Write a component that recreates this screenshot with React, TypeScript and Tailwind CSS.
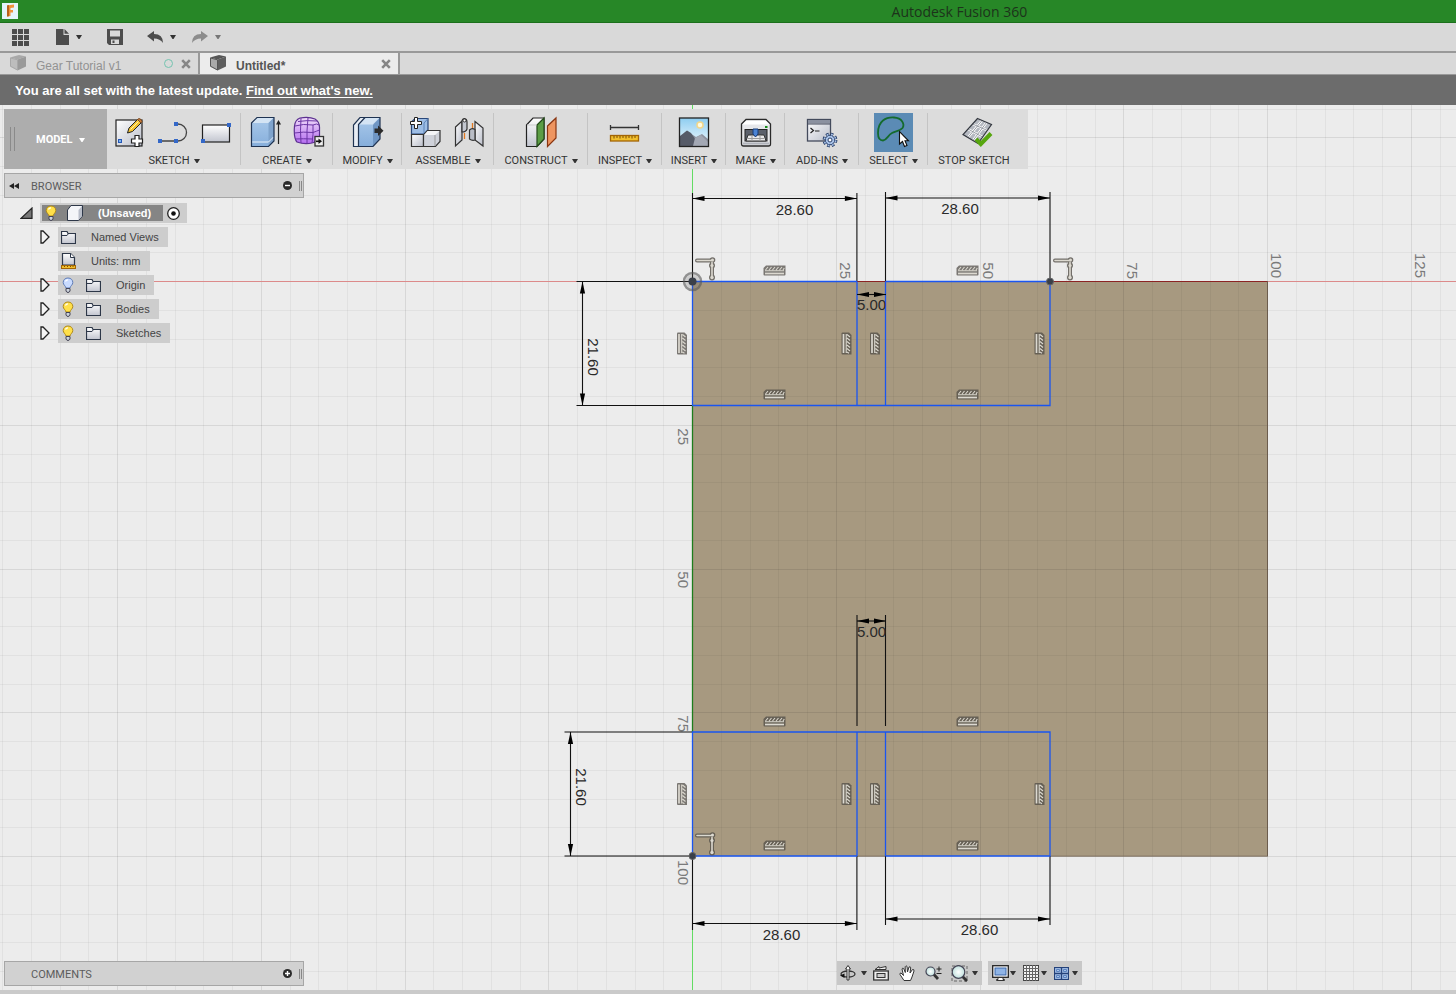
import React from "react";

type Kids = { children?: React.ReactNode };

/* ---------- small shared pieces ---------- */

function Caret({ className = "text-[#333]" }: { className?: string }) {
  return (
    <svg width="6" height="4" viewBox="0 0 6 4" className={"shrink-0 " + className} aria-hidden="true">
      <path d="M0 0H6L3.500 4H2.500Z" fill="currentColor" />
    </svg>
  );
}

function Icon({ w = 32, h = 40, children }: Kids & { w?: number; h?: number }) {
  return (
    <svg width={w} height={h} viewBox={`0 0 ${w} ${h}`} fill="none" className="shrink-0" aria-hidden="true">
      {children}
    </svg>
  );
}

/* ---------- ribbon icons ---------- */

const NAVY = "#1f3352";

function Gradients() {
  return (
    <svg width="0" height="0" className="absolute" aria-hidden="true">
      <defs>
        <linearGradient id="steel" x1="0" y1="0" x2="1" y2="1">
          <stop offset="0" stopColor="#ffffff" />
          <stop offset="1" stopColor="#b9bdc9" />
        </linearGradient>
        <linearGradient id="blue" x1="0" y1="0" x2="0" y2="1">
          <stop offset="0" stopColor="#a9c9ea" />
          <stop offset="1" stopColor="#86aedb" />
        </linearGradient>
        <linearGradient id="violet" x1="0" y1="0" x2="0" y2="1">
          <stop offset="0" stopColor="#f0dcfa" />
          <stop offset="1" stopColor="#b46cf0" />
        </linearGradient>
        <linearGradient id="sky" x1="0" y1="0" x2="0" y2="1">
          <stop offset="0" stopColor="#8ecdf0" />
          <stop offset="1" stopColor="#f3fbff" />
        </linearGradient>
        <linearGradient id="slab" x1="0" y1="0" x2="0" y2="1">
          <stop offset="0" stopColor="#ffffff" />
          <stop offset="1" stopColor="#c2c5cf" />
        </linearGradient>
        <radialGradient id="lens">
          <stop offset="0" stopColor="#ffffff" />
          <stop offset="1" stopColor="#bfe0dd" />
        </radialGradient>
      </defs>
    </svg>
  );
}

function SketchIcon() {
  return (
    <Icon>
      <rect x="1" y="7" width="26" height="26" fill="url(#steel)" stroke="#222" strokeWidth="1.200" />
      <rect x="3.500" y="26.500" width="3" height="3" fill="#7db4ee" stroke="#2457b8" />
      <path d="M12.500 20L14 15L22.500 6.500L26 10L17.500 18.500Z" fill="#f5c431" stroke="#222" />
      <path d="M22.500 6.500L24 5.500Q26.500 6 27 8.500L26 10Z" fill="#c77b3a" stroke="#7a4a20" />
      <path d="M15.500 16.500L23.500 8.500" stroke="#fff4a8" />
      <path d="M20 22.500H24V26H27.500V30H24V33.500H20V30H16.500V26H20Z" fill="#fff" stroke="#222" strokeWidth="1.200" />
    </Icon>
  );
}

function LineIcon() {
  return (
    <Icon>
      <path d="M2 28H20A8.500 8.500 0 0 0 20 11H18" stroke="#444" strokeWidth="1.300" />
      <path d="M0 26H4V30H0ZM16 26H20V30H16ZM16 9H20V13H16Z" fill="#3468c8" />
    </Icon>
  );
}

function RectIcon() {
  return (
    <Icon>
      <rect x="1.500" y="12" width="27" height="17" fill="url(#slab)" stroke="#222" strokeWidth="1.200" />
      <path d="M26 10H30V14H26ZM0 26H4V30H0Z" fill="#3468c8" />
    </Icon>
  );
}

function ExtrudeIcon() {
  return (
    <Icon>
      <path d="M1.500 10L7 4.500H24V28L18.500 33.500H1.500Z" fill="url(#blue)" />
      <path d="M1.500 10L7 4.500H24L18.500 10Z" fill="#d4e4f4" />
      <path d="M18.500 10L24 4.500V28L18.500 33.500Z" fill="#7fa3cc" />
      <path d="M2 29H18.500L23.500 24" stroke="#e9f1fa" />
      <path d="M1.500 10L7 4.500H24V28L18.500 33.500H1.500Z" stroke={NAVY} strokeWidth="1.200" />
      <path d="M28.500 31V9" stroke="#222" strokeWidth="1.200" />
      <path d="M26 11.500L28.500 7L31 11.500Z" fill="#222" />
    </Icon>
  );
}

function FormIcon() {
  return (
    <Icon>
      <path d="M7 5Q16 3.500 22 6Q27 9 26.500 16V23Q24 29 19 30Q11 31.500 4 29Q0.500 25 1.500 13Q2 7 7 5Z" fill="url(#violet)" stroke="#5c3090" strokeWidth="1.200" />
      <path d="M2 13Q10 10.500 20 12Q24 10 26 12M1.500 20Q10 18.500 20 19.500Q24 18 26.500 17M2 26Q10 25.500 20 26M8 5Q7 18 8 30M15 5Q13.500 18 14 30.500M20 12Q20.500 22 19 30M5 8.500Q14 7 24 8" stroke="#6b35a5" />
      <rect x="22" y="23.500" width="8.500" height="9.500" fill="#eee" stroke="#333" strokeWidth="1.300" />
      <path d="M23 28.300H26" stroke="#111" strokeWidth="1.600" />
      <path d="M25.500 25.500L29 28.300L25.500 31Z" fill="#111" />
    </Icon>
  );
}

function ModifyIcon() {
  return (
    <Icon>
      <path d="M1.500 12L8 4.500H28V26L21 33.500H1.500Z" fill="#e8edf4" />
      <path d="M6.500 11.500L13 4.500H28L21 11.500V33.500H6.500Z" fill="url(#blue)" />
      <path d="M6.500 11.500L13 4.500H28L21 11.500Z" fill="#d4e4f4" />
      <path d="M21 11.500L28 4.500V26L21 33.500Z" fill="#6f96c4" />
      <path d="M13 4.500L6.500 11.500V33.500M8 4.500H28V26L21 33.500H1.500V12L8 4.500Z" stroke={NAVY} strokeWidth="1.200" />
      <path d="M22.500 15.500H26V12.500L31.500 17.800L26 23V20H22.500Z" fill="#2b2b2b" />
    </Icon>
  );
}

function AssembleIcon() {
  return (
    <Icon>
      <path d="M1.500 9L5 5.500H18V17L14 21H1.500Z" fill="#9dbde5" stroke="#29477a" strokeWidth="1.200" />
      <path d="M14 21V10L18 5.500" stroke="#5d84ba" />
      <path d="M1.500 21.500H13.500V33.500H1.500Z" fill="url(#steel)" stroke="#333" strokeWidth="1.200" />
      <path d="M13.500 22L17.500 17.500H30V28.500L25.500 33.500H13.500Z" fill="#cfd2da" stroke="#333" strokeWidth="1.200" />
      <path d="M14 22H25L29.500 18H17.500Z" fill="#f4f5f7" />
      <path d="M25 22V33" stroke="#999" />
      <path d="M4.500 4.500H7.500V8.500H11.500V11.500H7.500V15.500H4.500V11.500H0.500V8.500H4.500Z" fill="#fff" stroke="#222" />
    </Icon>
  );
}

function JointIcon() {
  return (
    <Icon>
      <path d="M1.500 14L8 8V27L1.500 33Z" fill="url(#steel)" stroke="#333" strokeWidth="1.200" />
      <path d="M8 8Q8.500 5.500 10.500 5.500Q13 6 13 9V16Q12 19 8 19Z" fill="#c3c7d0" stroke="#333" strokeWidth="1.200" />
      <circle cx="10.500" cy="7.500" r="1.500" fill="#fff" stroke="#333" />
      <path d="M10.500 20V26M18.500 10V16" stroke="#e07820" strokeWidth="1.300" />
      <path d="M21 8.500L29 15V33L21 27Z" fill="url(#steel)" stroke="#333" strokeWidth="1.200" />
      <path d="M15.500 17Q18 14.500 21 16.500V27Q18 28 15.500 26Z" fill="#b9bdc7" stroke="#333" strokeWidth="1.200" />
    </Icon>
  );
}

function ConstructIcon() {
  return (
    <Icon>
      <path d="M1.500 12L8 5H19V26L12 33.500H1.500Z" fill="url(#slab)" stroke="#222" strokeWidth="1.200" />
      <path d="M12 12L19 5V26L12 33.500Z" fill="#5b9d45" stroke="#234a1a" strokeWidth="1.200" />
      <path d="M2 12H11.500" stroke="#ccc" />
      <path d="M22.500 13L31 5V25L22.500 33.500Z" fill="#ee9560" stroke="#8a3510" strokeWidth="1.200" />
    </Icon>
  );
}

function InspectIcon() {
  return (
    <Icon>
      <path d="M1.500 12V17M29.500 12V17M1.500 14.500H29.500" stroke="#333" strokeWidth="1.300" />
      <rect x="1.500" y="22.500" width="28" height="5.500" fill="#f1bf2c" stroke="#a36505" strokeWidth="1.300" />
      <path d="M5 23V25.500M8 23V25M11 23V25.500M14 23V25M17 23V25.500M20 23V25M23 23V25.500M26 23V25" stroke="#7d4d04" />
    </Icon>
  );
}

function InsertIcon() {
  return (
    <Icon>
      <rect x="1.500" y="5" width="29" height="28.500" fill="url(#sky)" />
      <circle cx="22" cy="12" r="3" fill="#fffbe0" stroke="#f2d68a" strokeWidth="1.500" />
      <path d="M2 24L9 18L18 24L24 21L30 26V33H2Z" fill="#8d929f" />
      <path d="M2 23L9 17.500L13 20L22 33H2Z" fill="#565b68" />
      <path d="M17 25L23 22L30 29V33H15Z" fill="#a3a8b4" />
      <rect x="1.500" y="5" width="29" height="28.500" stroke="#222" strokeWidth="1.300" />
    </Icon>
  );
}

function MakeIcon() {
  return (
    <Icon>
      <path d="M1.500 11L6 6.500H26L30.500 11V31Q30.500 33 28.500 33H3.500Q1.500 33 1.500 31Z" fill="#e6e7ea" stroke="#2a2a2a" strokeWidth="1.300" />
      <path d="M2.500 11.500L6.500 7.500H25.500L29.500 11.500Z" fill="#fff" />
      <rect x="5" y="16.500" width="22" height="11.500" fill="#5b606b" stroke="#222" />
      <path d="M8 22H24L26 28H6Z" fill="#e8e8ea" stroke="#333" />
      <path d="M8 25.500H24M12 22V28M20 22V28" stroke="#999" />
      <path d="M13 16H18V21L15.500 24L13 21Z" fill="#4a83d4" stroke="#173a78" />
      <rect x="25" y="13" width="2.500" height="2" fill="#178a17" />
      <path d="M3 30.500H29" stroke="#b0b3bb" strokeWidth="2" />
    </Icon>
  );
}

function AddinsIcon() {
  return (
    <Icon>
      <rect x="1.500" y="6.500" width="23" height="21.500" fill="url(#steel)" stroke="#444b5c" strokeWidth="1.300" />
      <rect x="2" y="7" width="22" height="3.500" fill="#8b91a0" />
      <path d="M2 11H24" stroke="#444b5c" />
      <path d="M4.500 15L7.500 17.500L4.500 20M9 18H13.500" stroke="#222" strokeWidth="1.200" />
      <circle cx="24" cy="27" r="5.700" stroke="#253c66" strokeWidth="3.400" strokeDasharray="2.500 1.977" />
      <circle cx="24" cy="27" r="4.800" fill="#a9c2e8" stroke="#253c66" />
      <circle cx="24" cy="27" r="5.700" stroke="#a9c2e8" strokeWidth="1.600" strokeDasharray="1.700 2.777" strokeDashoffset="-0.400" />
      <circle cx="24" cy="27" r="2" fill="#fff" stroke="#253c66" />
    </Icon>
  );
}

function SelectIcon() {
  return (
    <Icon w={39} h={39}>
      <path d="M4 20C4 8 12 4 20 4.500C28 5 31 11 28.500 15C26 18 21 18.500 18 20C14 22 13 27 9 27.500C5 27.500 4 24 4 20Z" stroke="#146b2d" strokeWidth="1.800" />
      <path d="M25.500 18.500V31L28.500 28.500L30.500 33.500L33 32.500L31 27.800H34.500Z" fill="#fff" stroke="#111" strokeWidth="1.100" />
    </Icon>
  );
}

function StopIcon() {
  return (
    <Icon>
      <path d="M15.500 5.500L29.500 11.500L16 30.500L1 21.500Z" fill="#b4b8c0" />
      <path d="M20 7.500L6 24.500M24.500 9.500L11 27.500M10.500 11L25.500 17.500M6 16L20.500 24" stroke="#fff" strokeWidth="2.400" />
      <path d="M20 7.500L6 24.500M24.500 9.500L11 27.500M10.500 11L25.500 17.500M6 16L20.500 24" stroke="#8a8f99" strokeWidth="0.900" />
      <path d="M15.500 5.500L29.500 11.500L16 30.500L1 21.500Z" stroke="#33373f" strokeWidth="1.200" />
      <path d="M14 26L18.800 31L29 20.500" stroke="#57a60f" strokeWidth="4" />
    </Icon>
  );
}

/* ---------- ribbon ---------- */

type GroupProps = { label: string; width: string; icons: { name: string; art: React.ReactNode }[]; gap?: string; active?: boolean; menu?: boolean; last?: boolean };

function Group({ label, width, icons, gap = "gap-3", active = false, menu = true, last = false }: GroupProps) {
  return (
    <div className={"relative flex flex-col items-center pt-1 " + width}>
      <div className={"flex h-10 items-start " + gap}>
        {icons.map((i) => (
          <button key={i.name} type="button" aria-label={i.name} className={active ? "h-[39px] bg-[#5b8bb5]" : "h-10"}>
            {i.art}
          </button>
        ))}
      </div>
      <button type="button" className="flex h-4 items-center gap-1 whitespace-nowrap text-[11px] leading-4 text-[#333]">
        {label}
        {menu && <Caret />}
      </button>
      {!last && <span className="absolute right-0 top-1 h-[52px] w-px bg-[#c4c4c4]" />}
    </div>
  );
}

function Ribbon() {
  return (
    <div className="flex h-[60px] w-fit bg-[#dcdcdc] font-[Roboto,sans-serif]">
      <div className="flex w-[103px] items-center bg-[#adadad] pl-[6px]">
        <span className="h-6 w-[5px] border-x border-[#8a8a8a]" />
        <button type="button" className="ml-[21px] flex items-center gap-[6px] pt-[2px] text-[11px] font-bold text-white">
          MODEL
          <Caret className="text-white" />
        </button>
      </div>
      <Group label="SKETCH" width="w-[134px]" icons={[{ name: "Create sketch", art: <SketchIcon /> }, { name: "Line", art: <LineIcon /> }, { name: "Rectangle", art: <RectIcon /> }]} gap="gap-[11px]" />
      <Group label="CREATE" width="w-[92px]" icons={[{ name: "Extrude", art: <ExtrudeIcon /> }, { name: "Create form", art: <FormIcon /> }]} gap="gap-[11px]" />
      <Group label="MODIFY" width="w-[69px]" icons={[{ name: "Press pull", art: <ModifyIcon /> }]} />
      <Group label="ASSEMBLE" width="w-[92px]" icons={[{ name: "New component", art: <AssembleIcon /> }, { name: "Joint", art: <JointIcon /> }]} />
      <Group label="CONSTRUCT" width="w-[94px]" icons={[{ name: "Offset plane", art: <ConstructIcon /> }]} />
      <Group label="INSPECT" width="w-[74px]" icons={[{ name: "Measure", art: <InspectIcon /> }]} />
      <Group label="INSERT" width="w-[64px]" icons={[{ name: "Insert image", art: <InsertIcon /> }]} />
      <Group label="MAKE" width="w-[59px]" icons={[{ name: "3D print", art: <MakeIcon /> }]} />
      <Group label="ADD-INS" width="w-[74px]" icons={[{ name: "Scripts and add-ins", art: <AddinsIcon /> }]} />
      <Group label="SELECT" width="w-[69px]" icons={[{ name: "Select", art: <SelectIcon /> }]} active />
      <Group label="STOP SKETCH" width="w-[100px] pr-2" icons={[{ name: "Stop sketch", art: <div className="pl-2"><StopIcon /></div> }]} menu={false} last />
    </div>
  );
}

/* ---------- window chrome ---------- */

function TitleBar() {
  return (
    <header className="flex h-[23px] items-center border-b border-[#1c701c] bg-[#278727]">
      <svg width="16" height="16" viewBox="0 0 16 16" className="ml-[2px] shrink-0" aria-hidden="true">
        <rect width="16" height="16" fill="#e4f3fb" />
        <path d="M5 2.500L12 1.500V4.500L8.500 5V7H11V9.500H8.500V13L5 13.500Z" fill="#f0923a" />
        <path d="M5 2.500L7 2V13.200L5 13.500Z" fill="#b9601c" />
      </svg>
      <div className="w-[60%]" />
      <h1 className="whitespace-nowrap pt-[2px] font-['Open_Sans',sans-serif] text-[14px] leading-5 text-[#1d331b]">Autodesk Fusion 360</h1>
    </header>
  );
}

function QuickBar() {
  return (
    <div className="flex h-[30px] items-center border-b-2 border-[#999] bg-[#d9d9d9] pl-3 text-[#4d4d4d]">
      <button type="button" aria-label="Data panel">
        <Icon w={17} h={17}>
          <path d="M0 0H5V5H0ZM6 0H11V5H6ZM12 0H17V5H12ZM0 6H5V11H0ZM6 6H11V11H6ZM12 6H17V11H12ZM0 12H5V17H0ZM6 12H11V17H6ZM12 12H17V17H12Z" fill="#4d4d4d" />
        </Icon>
      </button>
      <button type="button" aria-label="File" className="ml-[27px] flex items-center gap-[7px]">
        <Icon w={13} h={16}>
          <path d="M0 0H7.500V6H13V16H0ZM8.500 0L13 4.800H8.500Z" fill="#4d4d4d" />
        </Icon>
        <Caret />
      </button>
      <button type="button" aria-label="Save" className="ml-[25px]">
        <Icon w={16} h={16}>
          <path fillRule="evenodd" d="M0 0H16V16H2L0 14ZM3 1.500V7.500H13V1.500ZM4 10.500V15H12V10.500ZM5.500 11.500H7.500V14H5.500Z" fill="#4d4d4d" />
        </Icon>
      </button>
      <button type="button" aria-label="Undo" className="ml-6 flex items-center gap-[7px]">
        <Icon w={16} h={12}>
          <path d="M0 5L7 0V3Q16 3 16 12Q13 7.500 7 7.500V10.500Z" fill="#4d4d4d" />
        </Icon>
        <Caret />
      </button>
      <button type="button" aria-label="Redo" className="ml-4 flex items-center gap-[7px]">
        <Icon w={16} h={12}>
          <path d="M16 5L9 0V3Q0 3 0 12Q3 7.500 9 7.500V10.500Z" fill="#8c8c8c" />
        </Icon>
        <Caret className="text-[#777]" />
      </button>
    </div>
  );
}

function TabCube({ light, mid, dark }: { light: string; mid: string; dark: string }) {
  return (
    <svg width="16" height="16" viewBox="0 0 16 16" className="mb-[2px] shrink-0" aria-hidden="true">
      <path d="M0 2.500L9 0L16 1.500L7.500 4.500Z" fill={mid} />
      <path d="M0 2.500L7.500 4.500V15.500L0 11.500Z" fill={light} />
      <path d="M7.500 4.500L16 1.500V11.500L7.500 15.500Z" fill={dark} />
      <path d="M0.500 3L7.500 4.800V15L0.500 11.200Z" stroke={mid} fill="none" />
    </svg>
  );
}

function CloseX({ name }: { name: string }) {
  return (
    <button type="button" aria-label={name}>
      <Icon w={10} h={10}>
        <path d="M1.200 1.200L8.800 8.800M8.800 1.200L1.200 8.800" stroke="#868686" strokeWidth="2.600" />
      </Icon>
    </button>
  );
}

function Tabs() {
  return (
    <div className="flex h-[22px] border-b border-[#999] bg-[#d9d9d9] text-[12px]">
      <div className="flex w-[200px] items-center border-r-2 border-[#999] pl-[10px] pr-[7px]">
        <TabCube light="#bdbdbd" mid="#a8a8a8" dark="#9a9a9a" />
        <button type="button" className="ml-[10px] pt-1 leading-4 text-[#929292]">Gear Tutorial v1</button>
        <span className="ml-auto mr-2 size-[9px] rounded-full border-[1.5px] border-[#74c4b0]" />
        <CloseX name="Close Gear Tutorial v1" />
      </div>
      <div className="flex w-[200px] items-center border-r-2 border-[#999] bg-[#ececec] pl-[10px] pr-[7px]">
        <TabCube light="#a9a9a9" mid="#555" dark="#5e5e5e" />
        <button type="button" className="ml-[10px] pt-1 font-bold leading-4 text-[#555]">Untitled*</button>
        <span className="ml-auto" />
        <CloseX name="Close Untitled" />
      </div>
    </div>
  );
}

/* ---------- browser tree ---------- */

function Bulb({ off = false }: { off?: boolean }) {
  return (
    <svg width="12" height="16" viewBox="0 0 12 16" className="shrink-0" aria-hidden="true">
      <path d="M6 1C9 1 10.800 3 10.800 5.500C10.800 8 8.500 8.500 8 11H4C3.500 8.500 1.200 8 1.200 5.500C1.200 3 3 1 6 1Z" fill={off ? "#c9dbff" : "#ffe04a"} stroke={off ? "#5f7db8" : "#b08a1a"} />
      <path d="M3.500 4.500Q4 2.800 6 2.800" stroke="#fff" fill="none" strokeWidth="1.300" />
      <path d="M4 11.500H8V14L7 15.300H5L4 14Z" fill="#ccd3dc" stroke="#445" />
    </svg>
  );
}

function Folder() {
  return (
    <svg width="15" height="13" viewBox="0 0 15 13" className="shrink-0" aria-hidden="true">
      <path d="M0.500 0.500H6L7 2.500H14.500V12.500H0.500Z" fill="url(#slab)" stroke="#2d3748" strokeWidth="1.200" />
      <path d="M0.500 4.500H6L7.500 2.500" stroke="#2d3748" fill="none" />
    </svg>
  );
}

function UnitsIcon() {
  return (
    <svg width="15" height="16" viewBox="0 0 15 16" className="shrink-0" aria-hidden="true">
      <path d="M1.500 12V0.500H9.500L13.500 4.500V12Z" fill="url(#slab)" stroke="#2d3748" strokeWidth="1.200" />
      <path d="M9.500 0.500V4.500H13.500" stroke="#2d3748" fill="#fff" />
      <rect x="0.500" y="12.500" width="14" height="3" fill="#f1bf2c" stroke="#a36505" />
      <path d="M3.500 13V14M6.500 13V14M9.500 13V14M12 13V14" stroke="#7d4d04" />
    </svg>
  );
}

function Expander() {
  return (
    <button type="button" aria-label="Expand" className="w-[18px]">
      <svg width="10" height="14" viewBox="0 0 10 14" aria-hidden="true">
        <path d="M1 1H3L9 7L3 13H1Z" fill="#f4f4f4" stroke="#222" strokeWidth="1.300" />
      </svg>
    </button>
  );
}

function TreeRow({ label, bulb, units = false }: { label: string; bulb?: "on" | "off"; units?: boolean }) {
  return (
    <li className="flex h-5 items-center pl-9">
      {units ? <span className="w-[18px]" /> : <Expander />}
      <span className="flex h-5 items-center bg-[#cdcdcd] pl-[3px] pr-[9px]">
        {bulb && <span className="mr-3 flex pl-[1px]"><Bulb off={bulb === "off"} /></span>}
        {units ? <UnitsIcon /> : <Folder />}
        <span className="ml-[15px] whitespace-nowrap">{label}</span>
      </span>
    </li>
  );
}

function PanelBar({ title, plus = false }: { title: string; plus?: boolean }) {
  return (
    <div className="flex h-[25px] w-[300px] shrink-0 items-center border border-[#a6a6a6] bg-[#d1d1d1] pr-[1px] font-[Roboto,sans-serif]">
      <span className="w-[26px] pl-1">
        {!plus && (
          <svg width="10" height="6" viewBox="0 0 10 6" aria-hidden="true">
            <path d="M5 0V6L0 3ZM10 0V6L5 3Z" fill="#222" />
          </svg>
        )}
      </span>
      <h2 className="pt-[2px] text-[11px] leading-4 text-[#5c5c5c]">{title}</h2>
      <button type="button" aria-label={plus ? "Expand panel" : "Collapse panel"} className="ml-auto">
        <Icon w={9} h={9}>
          <circle cx="4.500" cy="4.500" r="4.500" fill="#2b2b2b" />
          <path d={plus ? "M2 4.500H7M4.500 2V7" : "M2 4.500H7"} stroke="#fff" strokeWidth="1.400" />
        </Icon>
      </button>
      <span className="ml-[7px] h-[10px] w-[3px] border-x border-[#888]" />
    </div>
  );
}

function BrowserPanel() {
  return (
    <section className="mt-1 w-[300px]">
      <PanelBar title="BROWSER" />
      <ul className="mt-[5px] flex flex-col gap-1 text-[11px] leading-5 text-[#444]">
        <li className="flex h-5 items-center pl-4">
          <button type="button" aria-label="Collapse" className="w-5">
            <svg width="13" height="12" viewBox="0 0 13 12" aria-hidden="true">
              <path d="M12 1V11.300H1Z" fill="#777" stroke="#222" strokeWidth="1.200" />
            </svg>
          </button>
          <span className="flex h-5 items-center bg-[#cdcdcd] pl-[2px]">
            <span className="flex h-4 items-center bg-[#858585] pl-[3px] pr-3">
              <Bulb />
              <svg width="16" height="16" viewBox="0 0 16 16" className="ml-[10px]" aria-hidden="true">
                <path d="M0.500 5L4 0.500H15.500V11L11.500 15.500H0.500Z" fill="#f4f5f8" stroke="#2d3748" />
                <path d="M11.500 5L15 1V11L11.500 15Z" fill="#b9bec9" />
              </svg>
              <b className="ml-[15px] text-white">(Unsaved)</b>
            </span>
            <svg width="13" height="13" viewBox="0 0 13 13" className="ml-1 mr-[7px]" aria-hidden="true">
              <circle cx="6.500" cy="6.500" r="5.800" fill="#fff" stroke="#222" strokeWidth="1.300" />
              <circle cx="6.500" cy="6.500" r="2.300" fill="#111" />
            </svg>
          </span>
        </li>
        <TreeRow label="Named Views" />
        <TreeRow label="Units: mm" units />
        <TreeRow label="Origin" bulb="off" />
        <TreeRow label="Bodies" bulb="on" />
        <TreeRow label="Sketches" bulb="on" />
      </ul>
    </section>
  );
}

/* ---------- navigation bar ---------- */

function NavBar() {
  return (
    <nav className="flex h-6 gap-[6px] text-[#333]">
      <div className="flex items-center bg-[#c8c8c8] pl-[3px] pr-1">
        <button type="button" aria-label="Orbit" className="flex items-center gap-[5px]">
          <Icon w={16} h={16}>
            <ellipse cx="8" cy="9" rx="7" ry="3" stroke="#333" strokeWidth="1.300" />
            <path d="M7 15V4H5.500L8 0.500L10.500 4H9V15Z" fill="#fff" stroke="#333" />
            <path d="M0 10.500L4.500 8.500V13Z" fill="#111" />
          </Icon>
          <Caret />
        </button>
        <button type="button" aria-label="Look at" className="ml-[6px]">
          <Icon w={16} h={16}>
            <rect x="0.700" y="6" width="14.600" height="9" fill="#eee" stroke="#333" strokeWidth="1.300" />
            <rect x="4" y="8.500" width="8" height="4" fill="#ccc" stroke="#333" />
            <path d="M2 4.500L6 1.500V3L13 1.500V4.500Z" fill="#eee" stroke="#333" />
          </Icon>
        </button>
        <button type="button" aria-label="Pan" className="ml-[10px]">
          <Icon w={16} h={16}>
            <path d="M5 15.500L1 9.500Q0.500 8 2 8L4.500 10.500L3 4Q3.500 2.500 4.700 3.500L6.300 7.500L6.200 1.700Q7 0 8 1.500L8.500 7L10 2Q11.500 1.200 11.700 2.800L11 8L13.500 4.500Q15.200 4 15 6L13 12L11.500 15.500Z" fill="#fff" stroke="#333" />
          </Icon>
        </button>
        <button type="button" aria-label="Zoom" className="ml-[10px]">
          <Icon w={17} h={16}>
            <path d="M8.500 9L13 14" stroke="#333" strokeWidth="2.800" />
            <circle cx="5.500" cy="6.500" r="4.500" fill="url(#lens)" stroke="#445" strokeWidth="1.200" />
            <path d="M11.500 4H16.500M14 1.500V6.500M11.500 8.500H16.500" stroke="#222" />
          </Icon>
        </button>
        <button type="button" aria-label="Zoom window" className="ml-[9px] flex items-center gap-1">
          <Icon w={17} h={17}>
            <rect x="1" y="1" width="15" height="15" stroke="#666" strokeDasharray="3 2" />
            <path d="M11.500 11.500L16 16" stroke="#333" strokeWidth="2.800" />
            <circle cx="7.500" cy="7" r="6.300" fill="url(#lens)" stroke="#445" strokeWidth="1.200" />
          </Icon>
          <Caret />
        </button>
      </div>
      <div className="flex items-center gap-[7px] bg-[#c8c8c8] px-1">
        <button type="button" aria-label="Display settings" className="flex items-center gap-px">
          <Icon w={17} h={16}>
            <rect x="0.700" y="0.700" width="15.600" height="11.600" fill="#fff" stroke="#222" strokeWidth="1.300" />
            <rect x="3" y="3" width="11" height="7" fill="#8fb4e6" stroke="#3a66a8" />
            <path d="M6 12.500H11V14.500H12.500V15.500H4.500V14.500H6Z" fill="#fff" stroke="#333" />
          </Icon>
          <Caret />
        </button>
        <button type="button" aria-label="Grid and snaps" className="flex items-center gap-[2px]">
          <Icon w={16} h={16}>
            <rect x="0.500" y="0.500" width="15" height="15" fill="#f4f4f4" stroke="#444" />
            <path d="M3.500 0V16M6.500 0V16M9.500 0V16M12.500 0V16M0 3.500H16M0 6.500H16M0 9.500H16M0 12.500H16" stroke="#666" />
          </Icon>
          <Caret />
        </button>
        <button type="button" aria-label="Viewports" className="flex items-center gap-[3px]">
          <Icon w={15} h={13}>
            <rect x="0.500" y="0.500" width="14" height="12" fill="#a9c4ea" stroke="#24427a" strokeWidth="1.200" />
            <path d="M7.500 0V13M0 6.500H15" stroke="#24427a" strokeWidth="1.400" />
            <path d="M2.500 2.500H5.500V4.500H2.500ZM9.500 2.500H12.500V4.500H9.500ZM2.500 8.500H5.500V10.500H2.500ZM9.500 8.500H12.500V10.500H9.500Z" stroke="#5b82be" />
          </Icon>
          <Caret />
        </button>
      </div>
    </nav>
  );
}

/* ---------- sketch canvas ---------- */

const ORIGIN_X = 692.5;
const ORIGIN_Y = 176.5;
const STEP = 28.75;
const GRID = Array.from({ length: 120 }, (_, i) => i - 30);
const snap = (v: number) => Math.floor(v) + 0.5;

type Pt = { x: number; y: number };

function Arrow({ x, y, turn = 0 }: Pt & { turn?: number }) {
  return <path d="M0 0L12 -2.600V2.600Z" fill="#000" stroke="none" transform={`translate(${x} ${y}) rotate(${turn})`} />;
}

function DimH({ x1, x2, y, from, to, tx, ty }: { x1: number; x2: number; y: number; from: number; to: number; tx: number; ty: number }) {
  return (
    <g stroke="#111" strokeWidth="1.100">
      <path d={`M${x1} ${from}V${to}M${x2} ${from}V${to}M${x1} ${y}H${x2}`} />
      <Arrow x={x1} y={y} />
      <Arrow x={x2} y={y} turn={180} />
      <text x={tx} y={ty} fill="#2a2a2a" stroke="none" textAnchor="middle">28.60</text>
    </g>
  );
}

function DimV({ x, y1, y2, tx, ty }: { x: number; y1: number; y2: number; tx: number; ty: number }) {
  return (
    <g stroke="#111" strokeWidth="1.100">
      <path d={`M${x - 6} ${y1}H692M${x - 6} ${y2}H692M${x} ${y1}V${y2}`} />
      <Arrow x={x} y={y1} turn={90} />
      <Arrow x={x} y={y2} turn={-90} />
      <text transform={`translate(${tx} ${ty}) rotate(90)`} fill="#2a2a2a" stroke="none" textAnchor="middle">21.60</text>
    </g>
  );
}

function Gap({ y, ty }: { y: number; ty: number }) {
  return (
    <g stroke="#111" strokeWidth="1.100">
      <path d={`M857 ${y}H886`} />
      <Arrow x={857} y={y} />
      <Arrow x={886} y={y} turn={180} />
      <text x="871.500" y={ty} fill="#2a2a2a" stroke="none" textAnchor="middle">5.00</text>
    </g>
  );
}

function Parallel({ x, y, upright = false }: Pt & { upright?: boolean }) {
  return (
    <g transform={`translate(${x} ${y}) rotate(${upright ? 90 : 0})`}>
      <path d="M-11 4Q-11 5 -10 5H10Q11 5 11 4V-5H-8.500L-11 -2.500Z" fill="#4d4a44" fillOpacity="0.720" />
      <path d="M-9.500 3H9.500" stroke="#dcd9d0" strokeWidth="1.700" />
      <path d="M-9.500 0.300H9.500M-9 -0.500L-6.500 -3.500M-5.500 -0.500L-3 -3.500M-2 -0.500L0.500 -3.500M1.500 -0.500L4 -3.500M5 -0.500L7.500 -3.500M8.500 -0.500L9.800 -2.500" stroke="#dcd9d0" strokeWidth="1.100" />
    </g>
  );
}

function Perpendicular({ x, y }: Pt) {
  return (
    <g transform={`translate(${x} ${y})`} fill="none" strokeLinecap="round" strokeLinejoin="round">
      <g opacity="0.800">
        <path d="M1.500 3H17M16.500 5V20" stroke="#55514a" strokeWidth="4" />
        <circle cx="17" cy="2.500" r="2.800" fill="#55514a" />
        <circle cx="16.500" cy="20" r="3" fill="#55514a" />
        <circle cx="16.500" cy="8" r="3" fill="#55514a" />
      </g>
      <path d="M1.500 3H17M16.500 5V20" stroke="#dcd9d0" strokeWidth="1.600" />
      <circle cx="17" cy="2.500" r="1.500" fill="#dcd9d0" />
      <circle cx="16.500" cy="20" r="1.700" fill="#dcd9d0" />
      <circle cx="16.500" cy="8" r="1.600" fill="#dcd9d0" />
    </g>
  );
}

const TOP_MARKS = [
  { t: "25", x: 840, y: 174 },
  { t: "50", x: 983, y: 174 },
  { t: "75", x: 1127, y: 174 },
  { t: "100", x: 1271, y: 173 },
  { t: "125", x: 1415, y: 173 },
];
const SIDE_MARKS = [
  { t: "25", x: 678, y: 340 },
  { t: "50", x: 678, y: 483 },
  { t: "75", x: 678, y: 627 },
  { t: "100", x: 678, y: 780 },
];

function SketchCanvas() {
  return (
    <svg className="absolute inset-0 h-full w-full bg-[#ececec]" fill="none" fontSize="15" fontFamily="'Liberation Sans', Arial, sans-serif" role="img" aria-label="Sketch view">
      <path d="M692 176.500H1267.500V751H692Z" fill="#a79980" />
      {GRID.map((i) => (
        <g key={i} stroke="#000" strokeOpacity={i % 5 === 0 ? 0.085 : 0.045}>
          <line x1={snap(ORIGIN_X + i * STEP)} x2={snap(ORIGIN_X + i * STEP)} y1="0" y2="100%" />
          {i !== 0 && <line y1={snap(ORIGIN_Y + i * STEP)} y2={snap(ORIGIN_Y + i * STEP)} x1="0" x2="100%" />}
        </g>
      ))}
      <path d="M0 176H9999V177H0Z" fill="#dc8a8a" />
      <line x1="692.500" x2="692.500" y1="0" y2="100%" stroke="#63dc63" />
      <path d="M692.500 300.500V627" stroke="#1d7d1d" strokeWidth="1.300" />
      <path d="M857 176.500H886M1050 176.500H1267" stroke="#8c2424" strokeWidth="1.200" />
      <path d="M1267.500 176V751.500" stroke="#6b5c4d" />
      <path d="M1050 751.200H1267M857 751.200H886" stroke="#7a6c5a" />

      <g fill="#7a7a7a">
        {TOP_MARKS.map((m) => (
          <text key={m.t} transform={`translate(${m.x} ${m.y}) rotate(90)`} textAnchor="end">{m.t}</text>
        ))}
        {SIDE_MARKS.map((m) => (
          <text key={m.t} transform={`translate(${m.x} ${m.y}) rotate(90)`} textAnchor="end">{m.t}</text>
        ))}
      </g>

      <DimH x1={692.5} x2={856.9} y={93.5} from={88} to={176} tx={794.5} ty={110} />
      <DimH x1={885.5} x2={1050} y={93} from={87} to={176} tx={960} ty={109} />
      <DimH x1={692.5} x2={856.9} y={818.5} from={751} to={825} tx={781.5} ty={835} />
      <DimH x1={885.5} x2={1050} y={814} from={751} to={820} tx={979.5} ty={830} />
      <DimV x={582.5} y1={176.5} y2={300.5} tx={588} ty={252} />
      <DimV x={570.5} y1={627} y2={751} tx={576} ty={682} />

      <g stroke="#1a55f0" strokeWidth="1.300">
        <path d="M692.500 300.500V176.500H857M885.500 176.500H1050V300.500H692.500M857 176.500V300.500M885.500 176.500V300.500" />
        <path d="M692.500 751V627H1050V751H885.500M692.500 751H857M857 627V751M885.500 627V751" />
      </g>

      <path d="M857 510V621M885.500 510V621" stroke="#111" strokeWidth="1.100" />
      <Gap y={189.5} ty={205} />
      <Gap y={516} ty={532} />

      {[165.5, 289.5, 616.5, 740.5].map((y) => (
        <g key={y}>
          <Parallel x={774.5} y={y} />
          <Parallel x={967.5} y={y} />
        </g>
      ))}
      {[238.5, 689].map((y) => (
        <g key={y}>
          <Parallel x={682} y={y} upright />
          <Parallel x={846.5} y={y} upright />
          <Parallel x={875} y={y} upright />
          <Parallel x={1039.5} y={y} upright />
        </g>
      ))}
      <Perpendicular x={695.5} y={152.5} />
      <Perpendicular x={1053.5} y={152.5} />
      <Perpendicular x={695.5} y={727.5} />

      <circle cx="692.500" cy="176.500" r="8.500" stroke="#555" strokeOpacity="0.600" strokeWidth="2.500" />
      <circle cx="692.500" cy="176.500" r="7" fill="#555" fillOpacity="0.200" />
      <circle cx="692.500" cy="176.500" r="4" fill="#3a3f48" />
      <circle cx="1050" cy="176.500" r="3.500" fill="#3a3f48" stroke="#666" />
      <circle cx="692.500" cy="751" r="3.500" fill="#3a3f48" stroke="#666" />
    </svg>
  );
}

export default function App() {
  return (
    <div className="flex h-screen flex-col overflow-hidden bg-[#ececec] font-['Liberation_Sans',Arial,sans-serif]">
      <Gradients />
      <TitleBar />
      <QuickBar />
      <Tabs />
      <div className="flex h-[30px] items-center bg-[#6c6c6c] pl-[15px] pt-[2px] text-[13px] font-bold text-white">
        <p>
          You are all set with the latest update.{" "}
          <a href="#whats-new" className="underline underline-offset-2">Find out what's new.</a>
        </p>
      </div>
      <main className="relative flex min-h-0 flex-1 flex-col">
        <SketchCanvas />
        <div className="relative flex flex-1 flex-col p-1">
          <Ribbon />
          <BrowserPanel />
          <div className="mt-auto flex">
            <PanelBar title="COMMENTS" plus />
            <div className="w-[533px]" />
            <NavBar />
          </div>
        </div>
      </main>
      <footer className="h-1 shrink-0 bg-[#cacaca]" />
    </div>
  );
}
